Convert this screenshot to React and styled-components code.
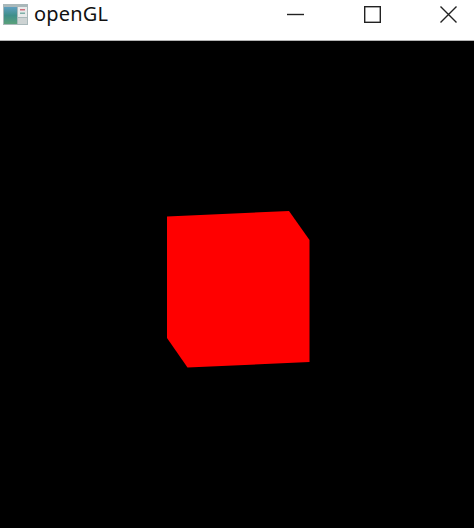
import styled, { createGlobalStyle } from 'styled-components'

const Global = createGlobalStyle`
  html, body {
    margin: 0;
    padding: 0;
    background: #000;
  }
`

const Window = styled.div`
  width: 474px;
  height: 528px;
  display: flex;
  flex-direction: column;
  overflow: hidden;
  background: #000;
`

const TitleBar = styled.div`
  height: 40px;
  flex: none;
  display: flex;
  align-items: flex-start;
  background: #fff;
  border-bottom: 1px solid #b4b4b4;
`

const AppIcon = styled.svg`
  width: 25px;
  height: 21px;
  margin: 4px 6px 0 3px;
  flex: none;
`

const Title = styled.span`
  flex: 1;
  font-family: "Noto Sans", "Open Sans", sans-serif;
  font-size: 20px;
  letter-spacing: 0.2px;
  line-height: 28px;
  color: #111;
`

const Controls = styled.div`
  display: flex;
  gap: 59.5px;
  padding: 5.5px 17px 0 0;
`

const Control = styled.svg`
  width: 17px;
  height: 17px;
  stroke: #222;
  stroke-width: 1.4;
  fill: none;
`

export default function App() {
  return (
    <Window>
      <Global />
      <TitleBar>
        <AppIcon viewBox="0 0 25 21">
          <defs>
            <linearGradient id="pane" x1="0" y1="0" x2="0" y2="1">
              <stop offset="0" stopColor="#5f9fc0" />
              <stop offset="0.5" stopColor="#3f8f8a" />
              <stop offset="1" stopColor="#5aa07a" />
            </linearGradient>
          </defs>
          <rect width="25" height="21" fill="#a9b8ba" />
          <rect x="1" y="3" width="13" height="17" fill="url(#pane)" />
          <rect x="15" y="3" width="9" height="10" fill="#e8eaea" />
          <rect x="17" y="5" width="5" height="1.5" fill="#cf6f7e" />
          <rect x="17" y="8.5" width="5" height="1.5" fill="#7fb0a8" />
          <rect x="15" y="14" width="9" height="6" fill="#cdd3d3" />
        </AppIcon>
        <Title>openGL</Title>
        <Controls>
          <Control viewBox="0 0 17 17"><path d="M0 8.5h17" /></Control>
          <Control viewBox="0 0 17 17"><rect x="0.7" y="0.7" width="15.6" height="15.6" /></Control>
          <Control viewBox="0 0 17 17"><path d="M0.5 0.5l16 16M16.5 0.5l-16 16" /></Control>
        </Controls>
      </TitleBar>
      <svg viewBox="0 41 474 487" width="474" height="487" style={{ display: 'block' }}>
        <polygon
          points="167,216.5 289,211 309.5,240 309.5,362 187.5,367.5 167,338"
          fill="#ff0000"
        />
      </svg>
    </Window>
  )
}
